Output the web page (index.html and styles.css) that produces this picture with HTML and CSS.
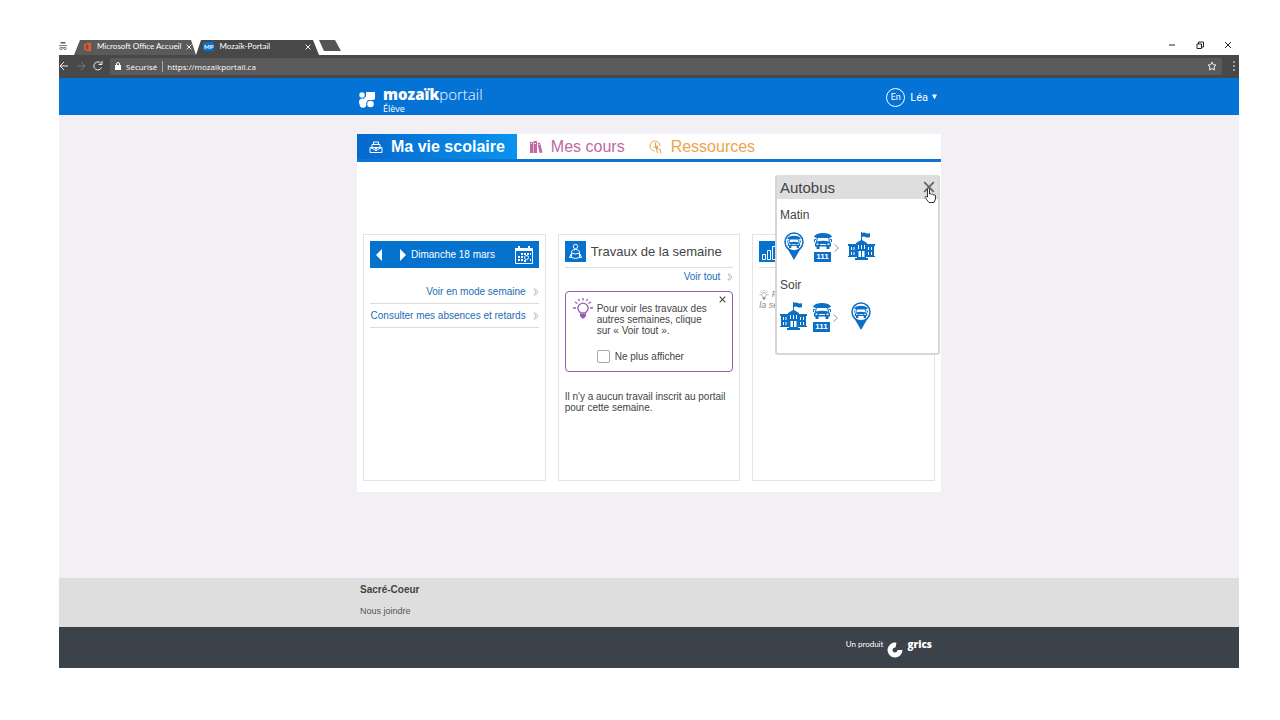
FILE: index.html
```html
<!DOCTYPE html>
<html lang="fr">
<head>
    <meta charset="UTF-8">
    <meta name="viewport" content="width=device-width, initial-scale=1.0">
    <title>Mozaïk-Portail</title>
    <link rel="stylesheet" href="styles.css">
</head>
<body>
    <svg class="sprite" width="0" height="0" aria-hidden="true">
        <symbol id="bus" viewBox="0 0 18 17">
            <path fill="currentColor" d="M0 5Q0 3.500 3 2Q9 0 15 2Q18 3.500 18 5L15 6H3Z"/>
            <path fill="none" stroke="currentColor" d="M3.500 5L2.500 10M14.500 5L15.500 10M2 7.500H.5V10M16 7.500H17.500V10"/>
            <path fill="currentColor" fill-rule="evenodd" d="M3 9.500Q9 8 15 9.500L17 11V14.500H15.500V17H12.500V14.500H5.500V17H2.500V14.500H1V11ZM2.500 11.500V13H4.500V11.500ZM13.500 11.500V13H15.500V11.500ZM6 12V13H12V12Z"/>
        </symbol>
        <symbol id="pin" viewBox="0 0 20 28">
            <path fill="currentColor" d="M10 28L2.500 15Q10 20 17.500 15Z"/>
            <circle cx="10" cy="10" r="9" fill="#fff" stroke="currentColor" stroke-width="1.500"/>
            <use href="#bus" x="3" y="3" width="14" height="13"/>
        </symbol>
        <symbol id="school" viewBox="0 0 27 28">
            <path fill="currentColor" d="M13 0H14V1Q16 0 18 1T22 1V5Q19 6 17.500 5T14 5V8L19 11H8L13 8Z"/>
            <path fill="currentColor" fill-rule="evenodd" d="M0 12H8V11H19V12H27V14H26V24H27V25H18V26H20V28H7V26H9V25H0V24H1V14H0ZM3 15V18H4V15ZM5.500 15V18H6.500V15ZM3 20V23H4V20ZM5.500 20V23H6.500V20ZM10 13V17H11V13ZM13 13V17H14V13ZM16 13V17H17V13ZM10.500 19V25H13V19ZM14 19V25H16.500V19ZM20 15V18H21V15ZM23 15V18H24V15ZM20 20V23H21V20ZM23 20V23H24V20Z"/>
        </symbol>
        <symbol id="bulb" viewBox="0 0 20 21">
            <g fill="none" stroke="currentColor" stroke-width="1.300">
                <path d="M7.500 15Q7 14 5.800 13A5 5 0 1 1 14.200 13Q13 14 12.500 15Z"/>
                <path d="M0 10H3M17 10H20M2 4L4.500 5.500M18 4L15.500 5.500M5.500 1L6.500 3M14.500 1L13.500 3M10 0V2.500"/>
            </g>
            <path fill="currentColor" d="M7 16H13V18L11 20.500H9L7 18Z"/>
        </symbol>
        <symbol id="chevrons" viewBox="0 0 6 8">
            <path fill="none" stroke="#b4c4d2" d="M1 1H2.500L5 4L2.500 7H1L3 4Z"/>
        </symbol>
        <symbol id="cross" viewBox="0 0 10 10">
            <path fill="none" stroke="currentColor" stroke-width="1.500" d="M1 1L9 9M9 1L1 9"/>
        </symbol>
    </svg>

    <div class="window">
        <div class="tab-strip">
            <svg class="incognito" viewBox="0 0 10 12" aria-hidden="true">
                <path fill="#555" d="M2 1H8V3H2ZM0 5H10V6H0Z"/>
                <g fill="none" stroke="#555"><circle cx="2.500" cy="9" r="1.500"/><circle cx="7.500" cy="9" r="1.500"/><path d="M4 8H6"/></g>
            </svg>
            <div class="browser-tab">
                <svg class="favicon" viewBox="0 0 9 10" aria-hidden="true"><path fill="#e8592b" fill-rule="evenodd" d="M0 2L6 0L8 1V9L6 10L0 8ZM2 3V7L5 8V2Z"/></svg>
                <span class="tab-title">Microsoft Office Accueil</span>
                <button class="tab-close" aria-label="Fermer l'onglet"><svg viewBox="0 0 10 10"><use href="#cross"/></svg></button>
            </div>
            <div class="browser-tab active">
                <span class="mp-icon">MP</span>
                <span class="tab-title">Mozaïk-Portail</span>
                <button class="tab-close" aria-label="Fermer l'onglet"><svg viewBox="0 0 10 10"><use href="#cross"/></svg></button>
            </div>
            <button class="new-tab" aria-label="Nouvel onglet"></button>
            <div class="window-controls">
                <button aria-label="Réduire"><svg viewBox="0 0 8 8"><path d="M1 4H7"/></svg></button>
                <button aria-label="Restaurer"><svg viewBox="0 0 8 8"><path d="M1 3H5.500V7.500H1ZM2.500 3V1H7.500V6H5.500"/></svg></button>
                <button aria-label="Fermer"><svg viewBox="0 0 8 8"><path d="M1 1L7 7M7 1L1 7"/></svg></button>
            </div>
        </div>

        <div class="toolbar">
            <button aria-label="Précédent"><svg viewBox="0 0 10 10"><path d="M9 5H1M5 1L1 5L5 9"/></svg></button>
            <button class="disabled" aria-label="Suivant"><svg viewBox="0 0 10 10"><path d="M1 5H9M5 1L9 5L5 9"/></svg></button>
            <button aria-label="Actualiser"><svg viewBox="0 0 10 10"><path d="M8.500 6.500A4 4 0 1 1 8 2.500M9 0V3.500H5.500"/></svg></button>
            <div class="address">
                <svg class="lock" viewBox="0 0 6 8" aria-hidden="true"><path fill="#fff" d="M0 3H6V8H0Z"/><path fill="none" stroke="#fff" d="M1.500 3V2A1.500 1.500 0 0 1 4.500 2V3"/></svg>
                <label for="url">Sécurisé</label>
                <input id="url" type="text" value="https://mozaikportail.ca">
                <button aria-label="Ajouter aux favoris"><svg viewBox="0 0 10 10"><path d="M5 1L6.200 3.700L9 4L7 6L7.500 9L5 7.500L2.500 9L3 6L1 4L3.800 3.700Z"/></svg></button>
            </div>
            <button class="menu-button" aria-label="Menu"><svg viewBox="0 0 10 10"><path stroke-dasharray="2 2" d="M5 0V10"/></svg></button>
        </div>

        <header class="site-header">
            <div class="container header-content">
                <a class="brand" href="#">
                    <svg class="brand-logo" viewBox="0 0 17 17" aria-hidden="true">
                        <g fill="#fff"><circle cx="4" cy="4" r="2.700"/><path d="M8 1H17V7Q17 9 14 9H10Q8 9 8 6Z"/><path d="M6 7L10 4V9L8 12Z"/><circle cx="4.500" cy="11" r="3.500"/><circle cx="5" cy="13.500" r="3.300"/><circle cx="12.500" cy="13" r="3.300"/></g>
                    </svg>
                    <span class="brand-text">
                        <span class="brand-name"><b>mozaïk</b>portail</span>
                        <span class="brand-role">Élève</span>
                    </span>
                </a>
                <div class="user">
                    <button class="lang">En</button>
                    <button class="user-menu">Léa <svg viewBox="0 0 6 6" aria-hidden="true"><path fill="#fff" d="M0 0H6L3 6Z"/></svg></button>
                </div>
            </div>
        </header>

        <main>
            <div class="container portal">
                <nav class="main-nav">
                    <a class="nav-life" href="#">
                        <svg viewBox="0 0 14 14" aria-hidden="true"><g fill="none" stroke="currentColor"><path d="M4.500 4V2H9.500V4M3 7V4.500H11V7M1 7.500H13V12.500H1ZM1 7.500L5.500 9.500M13 7.500L8.500 9.500"/><path d="M6 8.500H8V10.500H6Z"/></g></svg>
                        Ma vie scolaire
                    </a>
                    <a class="nav-courses" href="#">
                        <svg viewBox="0 0 14 14" aria-hidden="true"><path fill="currentColor" fill-rule="evenodd" d="M1 2H4V13H1ZM2 3V4H3V3ZM4.500 1H8V13H4.500ZM5.500 3V4H7V3ZM8.500 3L11 2.500L13.500 12.500L10.500 13ZM9.500 4L9.700 5L10.700 4.800L10.500 3.800Z"/></svg>
                        Mes cours
                    </a>
                    <a class="nav-resources" href="#">
                        <svg viewBox="0 0 14 14" aria-hidden="true"><g fill="none" stroke="currentColor"><path d="M5.500 11A5 5 0 1 1 11 6M6.500 2.500V8L4.500 7M8.500 13L7.500 10V6H8.500V9L11.500 9.500V13"/></g></svg>
                        Ressources
                    </a>
                </nav>

                <div class="cards">
                    <section class="card">
                        <div class="date-bar">
                            <button aria-label="Jour précédent"><svg viewBox="0 0 6 12"><path fill="#fff" d="M6 0V12L0 6Z"/></svg></button>
                            <button aria-label="Jour suivant"><svg viewBox="0 0 6 12"><path fill="#fff" d="M0 0V12L6 6Z"/></svg></button>
                            <span class="date">Dimanche 18 mars</span>
                            <button class="calendar" aria-label="Calendrier"><svg viewBox="0 0 18 18">
                                <path fill="#fff" d="M0 2H3V0H5V2H13V0H15V2H18V5H0Z"/>
                                <path fill="none" stroke="#fff" d="M.5 4V17.500H17.500V4"/>
                                <path fill="#fff" d="M6 7H8V9H6ZM9 7H11V9H9ZM12 7H14V9H12ZM3 10H5V12H3ZM6 10H8V12H6ZM3 13H5V15H3ZM6 13H8V15H6ZM9 14H11V16H9ZM15 7H16V9H15ZM15 13H16V15H15Z"/>
                                <circle cx="11.500" cy="11.500" r="2" fill="none" stroke="#fff"/>
                            </svg></button>
                        </div>
                        <ul class="links">
                            <li><a class="more" href="#">Voir en mode semaine <svg viewBox="0 0 6 8"><use href="#chevrons"/></svg></a></li>
                            <li><a class="more" href="#">Consulter mes absences et retards <svg viewBox="0 0 6 8"><use href="#chevrons"/></svg></a></li>
                        </ul>
                    </section>

                    <section class="card">
                        <div class="card-title">
                            <svg class="card-icon" viewBox="0 0 21 21" aria-hidden="true">
                                <path fill="#0572ce" d="M0 0H21V21H0Z"/>
                                <g fill="none" stroke="#fff"><circle cx="10.500" cy="5.500" r="2.200"/><path d="M6.500 12V10.500Q7 8.500 10.500 8.500T14.500 10.500V12M6.500 12L10.500 13L14.500 12V16.500L10.500 17.500L6.500 16.500ZM6 13L4.500 16.500H6.500M15 13L16.500 16.500H14.500"/></g>
                            </svg>
                            <h2>Travaux de la semaine</h2>
                        </div>
                        <a class="more" href="#">Voir tout <svg viewBox="0 0 6 8"><use href="#chevrons"/></svg></a>
                        <div class="tip">
                            <svg class="tip-icon" viewBox="0 0 20 21" aria-hidden="true"><use href="#bulb"/></svg>
                            <div class="tip-body">
                                <p>Pour voir les travaux des autres semaines, clique sur « Voir tout ».</p>
                                <label class="check"><input type="checkbox"> Ne plus afficher</label>
                            </div>
                            <button class="tip-close" aria-label="Fermer"><svg viewBox="0 0 10 10"><use href="#cross"/></svg></button>
                        </div>
                        <p class="empty">Il n'y a aucun travail inscrit au portail pour cette semaine.</p>
                    </section>

                    <section class="card">
                        <div class="card-title">
                            <svg class="card-icon" viewBox="0 0 21 21" aria-hidden="true">
                                <path fill="#0572ce" d="M0 0H21V21H0Z"/>
                                <path fill="none" stroke="#fff" d="M3.500 18.500V13.500H6.500V18.500ZM8.500 18.500V9.500H11.500V18.500ZM13.500 18.500V5.500H17.500V18.500Z"/>
                            </svg>
                        </div>
                        <p class="hint"><svg viewBox="0 0 20 21" aria-hidden="true"><use href="#bulb"/></svg> P<br>la se</p>
                    </section>
                </div>

                <aside class="bus-panel">
                    <div class="bus-header">
                        <h2>Autobus</h2>
                        <button aria-label="Fermer"><svg viewBox="0 0 10 10"><use href="#cross"/></svg></button>
                        <svg class="pointer" viewBox="0 0 12 16" aria-hidden="true"><path fill="#fff" stroke="#333" d="M3.500 9V2Q4.500 .5 5.500 2V7Q6.500 6 7.500 7.500Q8.500 6.500 9.500 8Q11 7 11.500 9V12L10 15.500H5L1 10.500Q1 8.500 3.500 10Z"/></svg>
                    </div>
                    <div class="trip">
                        <h3>Matin</h3>
                        <div class="route">
                            <svg class="pin" viewBox="0 0 20 28"><use href="#pin"/></svg>
                            <span class="bus"><svg viewBox="0 0 18 17"><use href="#bus"/></svg><span class="bus-number">111</span></span>
                            <svg class="arrow" viewBox="0 0 5 8"><path d="M.5 .5L4.500 4L.5 7.500"/></svg>
                            <svg class="school" viewBox="0 0 27 28"><use href="#school"/></svg>
                        </div>
                    </div>
                    <div class="trip">
                        <h3>Soir</h3>
                        <div class="route">
                            <svg class="school" viewBox="0 0 27 28"><use href="#school"/></svg>
                            <span class="bus"><svg viewBox="0 0 18 17"><use href="#bus"/></svg><span class="bus-number">111</span></span>
                            <svg class="arrow" viewBox="0 0 5 8"><path d="M.5 .5L4.500 4L.5 7.500"/></svg>
                            <svg class="pin" viewBox="0 0 20 28"><use href="#pin"/></svg>
                        </div>
                    </div>
                </aside>
            </div>
        </main>

        <footer>
            <div class="footer-school">
                <div class="container">
                    <strong>Sacré-Coeur</strong>
                    <a href="#">Nous joindre</a>
                </div>
            </div>
            <div class="footer-product">
                <div class="container">
                    <span>Un produit</span>
                    <svg viewBox="0 0 16 16" aria-hidden="true"><path fill="none" stroke="#fff" stroke-width="5" d="M13 8A5 5 0 1 1 9 3.100"/></svg>
                    <b>grics</b>
                </div>
            </div>
        </footer>
    </div>
</body>
</html>
```

FILE: styles.css
```css
* {
    box-sizing: border-box;
}
body {
    margin: 0;
    font-family: "Liberation Sans", Arial, sans-serif;
    font-size: 10px;
    line-height: 11px;
    color: #444;
    background-color: #fff;
}
h2, h3, p, ul {
    margin: 0;
    padding: 0;
    font-weight: normal;
}
a {
    color: #1c6cb5;
    text-decoration: none;
}
button {
    display: flex;
    align-items: center;
    justify-content: center;
    padding: 0;
    border: 0;
    background: none;
    color: inherit;
    font: inherit;
    cursor: pointer;
}
svg {
    display: block;
    flex-shrink: 0;
}
.sprite {
    position: absolute;
}
.window {
    display: flex;
    flex-direction: column;
    min-height: 100vh;
    padding: 40px 41px 52px 59px;
}

/* browser */
.tab-strip {
    display: flex;
    height: 15px;
    font-family: Lato, sans-serif;
    font-size: 8px;
    color: #fff;
}
.incognito {
    width: 8px;
    height: 12px;
    margin-right: 7px;
}
.browser-tab {
    display: flex;
    align-items: center;
    gap: 5px;
    width: 122px;
    padding: 0 8px 2px 10px;
    background-color: #5a5a5a;
    clip-path: polygon(6px 0, 117px 0, 100% 100%, 0 100%);
}
.browser-tab.active {
    width: 123px;
    padding: 0 8px 2px 7px;
    background-color: #484848;
    clip-path: polygon(5px 0, 117px 0, 100% 100%, 0 100%);
}
.favicon {
    width: 8px;
    height: 10px;
}
.mp-icon {
    padding: 0 1px;
    border-radius: 2px;
    background-color: #0572ce;
    font-size: 6px;
    font-weight: bold;
    line-height: 9px;
}
.tab-title {
    flex: 1;
    white-space: nowrap;
}
.tab-close svg {
    width: 6px;
    height: 6px;
}
.new-tab {
    width: 22px;
    height: 11px;
    background-color: #555;
    clip-path: polygon(0 0, 16px 0, 100% 100%, 5px 100%);
}
.window-controls {
    display: flex;
    gap: 20px;
    margin-left: auto;
    padding: 0 7px 5px 0;
}
.window-controls svg {
    width: 8px;
    height: 8px;
    fill: none;
    stroke: #222;
}
.toolbar {
    display: flex;
    align-items: center;
    gap: 7px;
    height: 23px;
    padding-bottom: 1px;
    background-color: #484848;
    font-family: "Open Sans", sans-serif;
    font-size: 8px;
    color: #fff;
}
.toolbar button svg {
    width: 10px;
    height: 10px;
    fill: none;
    stroke: #eee;
}
.toolbar .disabled svg {
    stroke: #777;
}
.address {
    display: flex;
    flex: 1;
    align-items: center;
    gap: 5px;
    height: 17px;
    padding: 0 5px;
    border-radius: 2px;
    background-color: #5a5a5a;
}
.lock {
    width: 6px;
    height: 8px;
}
.address input {
    flex: 1;
    height: 11px;
    padding: 0 0 0 4px;
    border: 0;
    border-left: 1px solid #aaa;
    background: none;
    color: #fff;
    font: inherit;
}

/* header */
.container {
    width: 100%;
    max-width: 584px;
    margin: 0 auto;
}
.site-header {
    background-color: #0572d6;
    color: #fff;
}
.header-content {
    display: flex;
    justify-content: space-between;
    height: 37px;
    padding: 6px 4px 0 1px;
}
.brand {
    display: flex;
    gap: 8px;
    color: #fff;
    font-family: "Open Sans", sans-serif;
}
.brand-logo {
    width: 17px;
    height: 17px;
    margin-top: 7px;
}
.brand-name {
    display: block;
    font-size: 15px;
    font-weight: 300;
    line-height: 20px;
}
.brand-name b {
    font-weight: 800;
}
.brand-role {
    display: block;
    font-size: 9px;
    line-height: 10px;
}
.user {
    display: flex;
    align-items: center;
    gap: 5px;
    height: 26px;
    font-family: Roboto, sans-serif;
    font-size: 11px;
}
.lang {
    width: 19px;
    height: 19px;
    border: 1px solid #fff;
    border-radius: 50%;
    font-size: 9px;
}
.user-menu {
    gap: 4px;
}
.user-menu svg {
    width: 5px;
    height: 6px;
}

/* portal */
main {
    flex: 1;
    padding: 19px 0 40px;
    background-color: #f2f0f4;
}
.portal {
    position: relative;
    padding-bottom: 11px;
    background-color: #fff;
}
.main-nav {
    display: flex;
    height: 28px;
    border-bottom: 3px solid #0f75d3;
}
.main-nav a {
    display: flex;
    align-items: center;
    gap: 8px;
    padding: 0 12px;
    font-size: 16px;
}
.main-nav svg {
    width: 14px;
    height: 14px;
}
.main-nav .nav-life {
    background-image: linear-gradient(90deg, #0668cd, #0a93ee);
    color: #fff;
    font-weight: bold;
}
.main-nav .nav-courses {
    color: #bd6a9f;
}
.main-nav .nav-resources {
    color: #eba54b;
}
.cards {
    display: grid;
    grid-template-columns: repeat(3, minmax(0, 1fr));
    gap: 12px;
    margin-top: 72px;
    padding: 0 6px;
}
.card {
    min-height: 247px;
    padding: 6px;
    border: 1px solid #e4e4e4;
}
.date-bar {
    display: flex;
    align-items: center;
    height: 27px;
    padding: 0 6px;
    background-color: #0572ce;
    color: #fff;
}
.date-bar svg {
    width: 6px;
    height: 12px;
}
.date-bar button + button {
    margin-left: 18px;
}
.date {
    flex: 1;
    padding-left: 5px;
}
.date-bar .calendar {
    margin-left: 0;
}
.date-bar .calendar svg {
    width: 18px;
    height: 18px;
}
.links {
    padding-top: 12px;
    list-style: none;
}
.links li {
    padding: 6px 0;
    border-bottom: 1px solid #ddd;
}
.more {
    display: flex;
    align-items: center;
    justify-content: flex-end;
    gap: 7px;
    white-space: nowrap;
}
.more svg {
    width: 6px;
    height: 8px;
}
.card-title {
    display: flex;
    gap: 5px;
    height: 27px;
    margin-bottom: 3px;
    border-bottom: 1px solid #ddd;
}
.card-title h2 {
    font-size: 13px;
    line-height: 22px;
    white-space: nowrap;
}
.card-icon {
    width: 21px;
    height: 21px;
}
.tip {
    position: relative;
    display: flex;
    gap: 4px;
    height: 81px;
    margin-top: 9px;
    padding: 6px 7px;
    border: 1px solid #9b59b6;
    border-radius: 4px;
}
.tip-icon {
    width: 20px;
    height: 21px;
    color: #9b59b6;
}
.tip-body {
    padding: 5px 14px 0 0;
}
.check {
    display: flex;
    align-items: center;
    gap: 5px;
    margin-top: 14px;
}
.check input {
    width: 13px;
    height: 13px;
    margin: 0;
    border: 1px solid #aaa;
    border-radius: 2px;
    background-color: #fff;
    appearance: none;
}
.tip-close {
    position: absolute;
    top: 4px;
    right: 6px;
}
.tip-close svg {
    width: 7px;
    height: 7px;
}
.empty {
    margin-top: 19px;
}
.hint {
    margin-top: 21px;
    color: #888;
    font-size: 9px;
    font-style: italic;
    line-height: 10px;
}
.hint svg {
    display: inline-block;
    width: 10px;
    height: 10px;
    vertical-align: middle;
}

/* bus panel */
.bus-panel {
    position: absolute;
    top: 41px;
    right: 1px;
    width: 165px;
    height: 180px;
    border: 2px solid #d6d6d6;
    border-top: 0;
    border-radius: 3px;
    background-color: #fff;
}
.bus-header {
    position: relative;
    display: flex;
    align-items: center;
    justify-content: space-between;
    height: 24px;
    padding: 0 3px;
    background-color: #dedede;
}
.bus-header h2 {
    font-size: 15px;
}
.bus-header button svg {
    width: 12px;
    height: 12px;
    color: #666;
}
.pointer {
    position: absolute;
    top: 12px;
    right: 2px;
    width: 12px;
    height: 16px;
}
.trip {
    height: 70px;
    padding: 9px 3px 0;
}
.trip h3 {
    font-size: 12px;
    line-height: 14px;
}
.route {
    display: flex;
    align-items: center;
    margin-top: 8px;
    color: #0b6fc6;
}
.pin {
    width: 20px;
    height: 28px;
    margin: 0 4px;
}
.school {
    width: 27px;
    height: 28px;
}
.bus {
    display: flex;
    flex-direction: column;
    align-items: center;
    gap: 3px;
    width: 17px;
    margin: 2px 2px 0 6px;
}
.bus svg {
    width: 18px;
    height: 17px;
}
.bus-number {
    width: 17px;
    background-color: #0b6fc6;
    color: #fff;
    font-size: 8px;
    font-weight: bold;
    line-height: 10px;
    text-align: center;
}
.arrow {
    width: 5px;
    height: 8px;
    margin: 4px 9px 0 1px;
    fill: none;
    stroke: #999;
}

/* footer */
.footer-school {
    height: 49px;
    padding-top: 6px;
    background-color: #dedede;
}
.footer-school .container {
    padding-left: 3px;
}
.footer-school strong {
    display: block;
}
.footer-school a {
    display: block;
    margin-top: 11px;
    color: #555;
    font-size: 9px;
}
.footer-product {
    height: 41px;
    background-color: #3b424a;
    color: #fff;
}
.footer-product .container {
    display: flex;
    align-items: flex-start;
    justify-content: flex-end;
    gap: 4px;
    padding: 12px 9px 0 0;
    font-family: Lato, sans-serif;
    font-size: 8px;
}
.footer-product svg {
    width: 16px;
    height: 16px;
    margin-top: 3px;
}
.footer-product b {
    font-family: "Open Sans", sans-serif;
    font-size: 10px;
    font-weight: 800;
}
```
